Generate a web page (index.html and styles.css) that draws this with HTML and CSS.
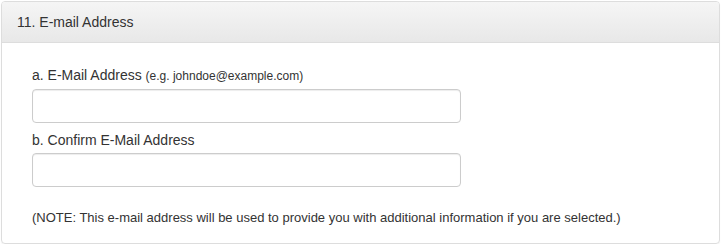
FILE: index.html
```html
<!DOCTYPE html>
<html>
<head>
<meta charset="utf-8">
<link rel="stylesheet" href="styles.css">
</head>
<body>
<div class="panel">
  <div class="panel-heading">11. E-mail Address</div>
  <div class="panel-body">
    <div class="field">
      <label class="label" for="email">a. E-Mail Address <span class="hint">(e.g. johndoe@example.com)</span></label>
      <input class="control" id="email" type="text">
    </div>
    <div class="field">
      <label class="label" for="email2">b. Confirm E-Mail Address</label>
      <input class="control" id="email2" type="text">
    </div>
    <p class="note">(NOTE: This e-mail address will be used to provide you with additional information if you are selected.)</p>
  </div>
</div>
</body>
</html>
```

FILE: styles.css
```css
html, body {
  margin: 0;
  padding: 0;
  background: #fff;
}
body {
  padding: 1px 0 0 1px;
  font-family: "Liberation Sans", Arial, sans-serif;
  font-size: 14px;
  color: #333;
}
.panel {
  box-sizing: border-box;
  width: 719px;
  height: 243px;
  border: 1px solid #ddd;
  border-radius: 4px;
  box-shadow: 0 1px 1px rgba(0,0,0,0.05);
  overflow: hidden;
}
.panel-heading {
  box-sizing: border-box;
  height: 41px;
  padding: 10px 15px;
  line-height: 20px;
  background: linear-gradient(to bottom, #f5f5f5 0%, #e8e8e8 100%);
  border-bottom: 1px solid #ddd;
  color: #333;
}
.panel-body {
  padding: 22px 30px 0 30px;
}
.field {
  display: flex;
  flex-direction: column;
  margin-bottom: 7px;
}
.label {
  display: block;
  line-height: 20px;
  margin-bottom: 3px;
}
.hint {
  font-size: 12px;
}
.control {
  box-sizing: border-box;
  display: block;
  width: 429px;
  height: 34px;
  margin: 0;
  padding: 6px 12px;
  font: inherit;
  color: #555;
  background: #fff;
  border: 1px solid #ccc;
  border-radius: 4px;
  box-shadow: inset 0 1px 1px rgba(0,0,0,0.075);
}
.note {
  margin: 22px 0 0 0;
  font-size: 13px;
  line-height: 18px;
}
```
